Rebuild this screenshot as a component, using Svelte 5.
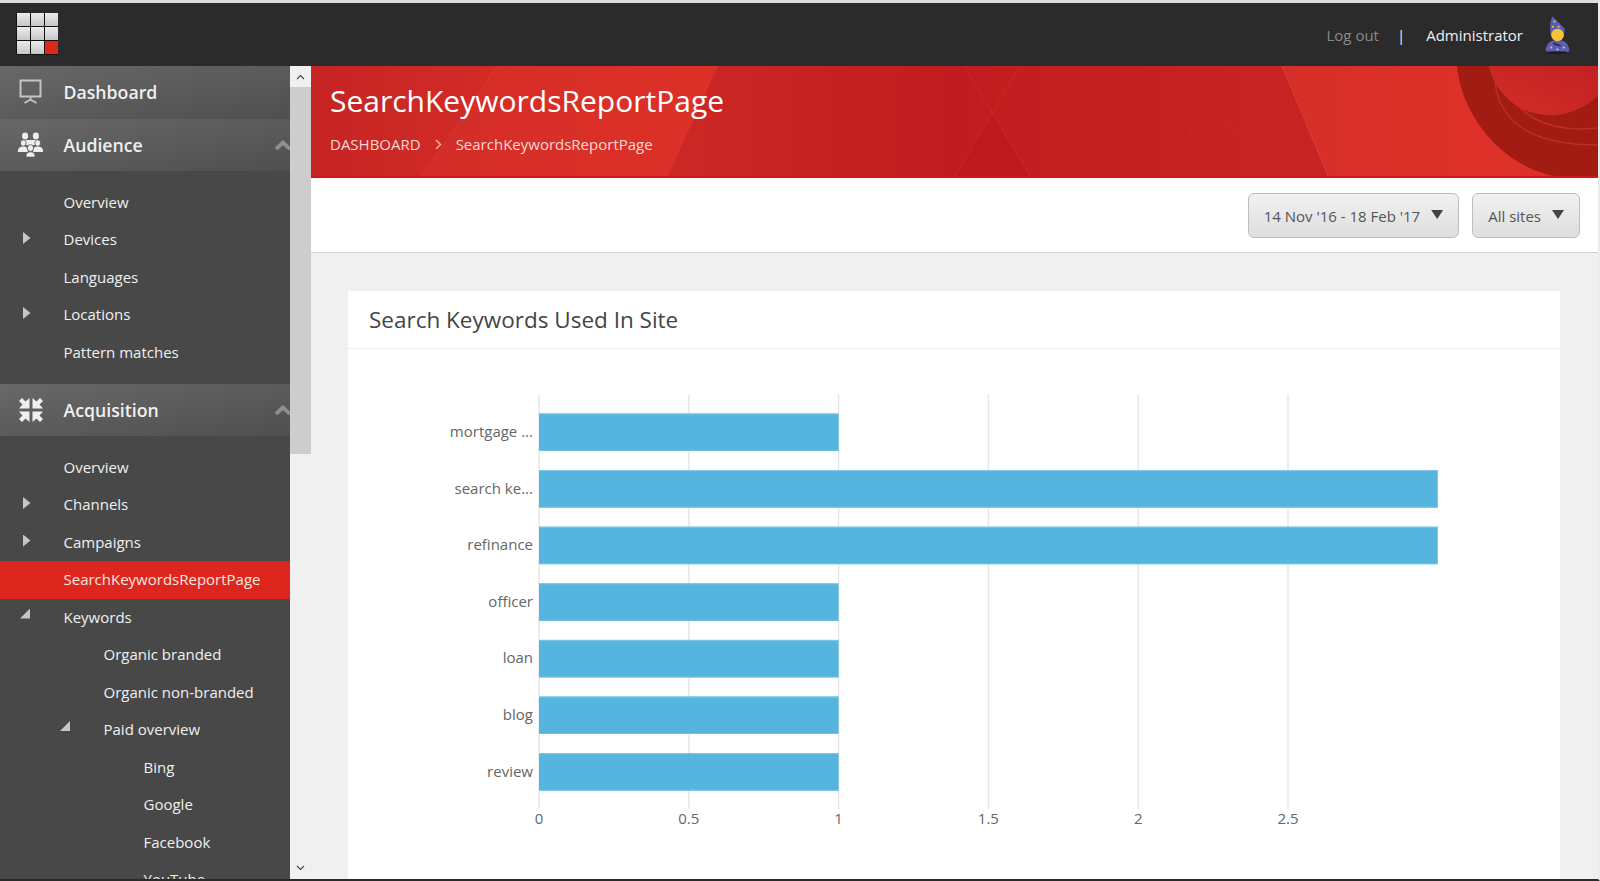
<script>
  const audience = [
    { label: "Overview" },
    { label: "Devices", arrow: "right" },
    { label: "Languages" },
    { label: "Locations", arrow: "right" },
    { label: "Pattern matches" },
  ];
  const acquisition = [
    { label: "Overview" },
    { label: "Channels", arrow: "right" },
    { label: "Campaigns", arrow: "right" },
    { label: "SearchKeywordsReportPage", active: true },
    { label: "Keywords", arrow: "down" },
    { label: "Organic branded", depth: 1 },
    { label: "Organic non-branded", depth: 1 },
    { label: "Paid overview", depth: 1, arrow: "down" },
    { label: "Bing", depth: 2 },
    { label: "Google", depth: 2 },
    { label: "Facebook", depth: 2 },
    { label: "YouTube", depth: 2 },
  ];

  const keywords = [
    { name: "mortgage ...", value: 1 },
    { name: "search ke...", value: 3 },
    { name: "refinance", value: 3 },
    { name: "officer", value: 1 },
    { name: "loan", value: 1 },
    { name: "blog", value: 1 },
    { name: "review", value: 1 },
  ];
  const ticks = [0, 0.5, 1, 1.5, 2, 2.5];
  const x0 = 539;
  const unit = 299.6;
</script>

<div class="page">
  <div class="frame">
    <header class="topbar">
      <div class="logo">
        {#each Array(9) as _, i}
          <span class:red={i === 8}></span>
        {/each}
      </div>
      <nav class="user">
        <span class="logout">Log out</span>
        <span class="sep">|</span>
        <span class="admin">Administrator</span>
        <svg class="wizard" width="25" height="40" viewBox="0 0 24 38">
          <path d="M7 1 L19 13 L18 21 L6 21 C4 14 5 6 7 1Z" fill="#5a5db4" />
          <path d="M3 35 C0 35 0 32 2 29 C4 25 7 24 12 24 C17 24 20 25 22 29 C24 32 24 36 20 36 Z" fill="#5b5fb8" />
          <ellipse cx="12" cy="36" rx="10" ry="1.5" fill="#1c1c1c" />
          <ellipse cx="12" cy="19" rx="6" ry="6" fill="#f6c23a" />
          <path d="M8 26 L16 29 L14 30 L8 28Z" fill="#2e2e50" />
          <g fill="#e8d24a">
            <circle cx="9" cy="6" r="1" /><circle cx="13" cy="11" r="1" /><circle cx="7.5" cy="11" r="1" />
            <circle cx="6" cy="31" r="1" /><circle cx="18" cy="31" r="1" /><circle cx="12" cy="33" r="1" />
          </g>
        </svg>
      </nav>
    </header>

    <div class="main">
      <aside class="sidebar">
        <div class="section">
          <svg class="sec-icon" width="26" height="26" viewBox="0 0 26 26" fill="none" stroke="#c4c4c4">
            <rect x="2.5" y="1.5" width="20" height="16" stroke-width="2" />
            <path d="M12.5 18 V20.5 M12.5 20.5 L6.5 24 M12.5 20.5 L18.5 24" stroke-width="1.8" />
          </svg>
          <span>Dashboard</span>
        </div>

        <div class="section">
          <svg class="sec-icon people" width="27" height="26" viewBox="0 0 30 26" preserveAspectRatio="none" fill="#eee">
            <circle cx="9" cy="4" r="3.4" /><circle cx="21" cy="4" r="3.4" />
            <path d="M5 13 C5 9 8 8 9 8 H21 C22 8 25 9 25 13 Z" />
            <circle cx="7" cy="11" r="3.2" stroke="#555" stroke-width=".8" /><circle cx="23" cy="11" r="3.2" stroke="#555" stroke-width=".8" />
            <path d="M1 20 C1 15 4 14.5 7 14.5 C10 14.5 12 15 12 20 Z" /><path d="M18 20 C18 15 20 14.5 23 14.5 C26 14.5 29 15 29 20 Z" />
            <circle cx="15" cy="16" r="3.4" stroke="#555" stroke-width=".8" />
            <path d="M10 25 C10 21 12 20 15 20 C18 20 20 21 20 25 Z" stroke="#555" stroke-width=".6" />
          </svg>
          <span>Audience</span>
          <svg class="chev" width="16" height="10" viewBox="0 0 16 10" fill="none" stroke="#8f8f8f" stroke-width="3.8"><path d="M1 9 L8 2.5 L15 9" /></svg>
        </div>
        <ul class="tree">
          {#each audience as item}
            <li class="d{item.depth ?? 0}" class:active={item.active}>
              {#if item.arrow}<i class="arrow {item.arrow}"></i>{/if}
              {item.label}
            </li>
          {/each}
        </ul>

        <div class="section">
          <svg class="sec-icon" width="26" height="26" viewBox="0 0 26 26" fill="#f0f0f0">
            <path d="M1 4 L4 1 L7.5 4.5 L11.5 1 V11.5 H1 L4.5 7.5 Z" />
            <path d="M25 4 L22 1 L18.5 4.5 L14.5 1 V11.5 H25 L21.5 7.5 Z" />
            <path d="M1 22 L4 25 L7.5 21.5 L11.5 25 V14.5 H1 L4.5 18.5 Z" />
            <path d="M25 22 L22 25 L18.5 21.5 L14.5 25 V14.5 H25 L21.5 18.5 Z" />
          </svg>
          <span>Acquisition</span>
          <svg class="chev" width="16" height="10" viewBox="0 0 16 10" fill="none" stroke="#8f8f8f" stroke-width="3.8"><path d="M1 9 L8 2.5 L15 9" /></svg>
        </div>
        <ul class="tree">
          {#each acquisition as item}
            <li class="d{item.depth ?? 0}" class:active={item.active}>
              {#if item.arrow}<i class="arrow {item.arrow}"></i>{/if}
              {item.label}
            </li>
          {/each}
        </ul>
      </aside>

      <div class="scroll">
        <button class="scroll-btn" aria-label="up">
          <svg width="9" height="6" viewBox="0 0 9 6" fill="none" stroke="#444" stroke-width="1.1"><path d="M1 5 L4.5 1.5 L8 5" /></svg>
        </button>
        <div class="thumb"></div>
        <button class="scroll-btn down" aria-label="down">
          <svg width="9" height="6" viewBox="0 0 9 6" fill="none" stroke="#444" stroke-width="1.1"><path d="M1 1 L4.5 4.5 L8 1" /></svg>
        </button>
      </div>

      <div class="content">
        <section class="banner">
          <svg class="banner-bg" viewBox="311 66 1287 112" preserveAspectRatio="none">
            <defs>
              <linearGradient id="g1" x1="0" x2="1" y1="0" y2="0">
                <stop offset="0" stop-color="#c52423" /><stop offset="1" stop-color="#d32c27" />
              </linearGradient>
              <linearGradient id="g2" x1="0" x2="1" y1="0" y2="0">
                <stop offset="0" stop-color="#d42d27" /><stop offset="1" stop-color="#dd3128" />
              </linearGradient>
              <linearGradient id="g3" x1="0" x2="1" y1="0" y2="0">
                <stop offset="0" stop-color="#cb2725" /><stop offset=".3" stop-color="#cb2725" /><stop offset=".5" stop-color="#c11c1f" /><stop offset=".72" stop-color="#c82323" /><stop offset="1" stop-color="#c92423" />
              </linearGradient>
              <linearGradient id="g4" x1="0" x2="1" y1="0" y2="0">
                <stop offset="0" stop-color="#d62f29" /><stop offset=".7" stop-color="#de3128" /><stop offset="1" stop-color="#d92e27" />
              </linearGradient>
              <linearGradient id="g5" x1="0" x2="1" y1="1" y2="0">
                <stop offset="0" stop-color="#d32d27" /><stop offset="1" stop-color="#c12222" />
              </linearGradient>
            </defs>
            <rect x="311" y="66" width="1287" height="112" fill="url(#g3)" />
            <polygon points="311,66 497,66 421,178 311,178" fill="url(#g1)" />
            <polygon points="497,66 718,66 667,178 421,178" fill="url(#g2)" />
            <polygon points="1282,66 1598,66 1598,178 1329,178" fill="url(#g4)" />
            <polygon points="992,113 954,178 1031,178" fill="#bd1a1d" />
            <path d="M964 66 L1031 178 M1020 66 L954 178" stroke="#d23a33" stroke-width="1" opacity=".45" fill="none" />
            <path d="M1182 66 L1197 178 M1215 118 L1300 178" stroke="#d23a33" stroke-width="1" opacity=".2" fill="none" />
            <path d="M1282 66 L1329 178" stroke="#e2463a" stroke-width="1" opacity=".7" fill="none" />
            <path d="M497 66 L421 178" stroke="#e0443a" stroke-width="1" opacity=".5" fill="none" />
            <path d="M1457 66 C1462 120 1510 178 1575 178 L1598 178 L1598 66 Z" fill="#a31c14" />
            <path d="M1489 66 C1490 72 1493 78 1495 83 C1502 94 1510 102 1520 108 C1530 113 1545 116 1557 115 C1572 113 1588 106 1598 95 L1598 66 Z" fill="url(#g5)" />
            <path d="M1495 83 C1500 118 1525 145 1598 145 M1520 108 C1535 122 1560 132 1598 128" fill="none" stroke="#bd2e25" stroke-width="1.5" />
          </svg>
          <h1>SearchKeywordsReportPage</h1>
          <div class="crumbs">
            <span>DASHBOARD</span>
            <svg width="7" height="11" viewBox="0 0 7 11" fill="none" stroke="#f0a9a0" stroke-width="1.6"><path d="M1 1 L5.5 5.5 L1 10" /></svg>
            <span>SearchKeywordsReportPage</span>
          </div>
        </section>

        <div class="toolbar">
          <button class="drop">14 Nov '16 - 18 Feb '17<i></i></button>
          <button class="drop">All sites<i></i></button>
        </div>

        <div class="body">
          <div class="card">
            <h2>Search Keywords Used In Site</h2>
            <svg class="chart" viewBox="348 349 1212 530" width="1212" height="530">
              {#each ticks as t}
                <line x1={x0 + t * unit} x2={x0 + t * unit} y1="394.5" y2="809" stroke="#e6e6e6" stroke-width="1.4" />
                <text x={x0 + t * unit} y="824" text-anchor="middle">{t}</text>
              {/each}
              {#each keywords as k, i}
                <rect x={x0} y={413.5 + i * 56.6} width={k.value * unit} height="37.5" fill="#55b5df" />
                <rect x={x0} y={413.5 + i * 56.6} width={k.value * unit} height="1" fill="#7fc8e8" />
                <rect x={x0} y={450 + i * 56.6} width={k.value * unit} height="1" fill="#6cc0e4" />
                <text x="533" y={437 + i * 56.6} text-anchor="end">{k.name}</text>
              {/each}
            </svg>
          </div>
        </div>
      </div>
    </div>
  </div>
</div>

<style>
  :global(body) {
    margin: 0;
    background: #fff;
  }

  .page {
    width: 1600px;
    height: 881px;
    overflow: hidden;
    font-family: "Open Sans", "Liberation Sans", sans-serif;
    box-sizing: border-box;
    border-top: 3px solid #dcdcdc;
    border-bottom: 2px solid #2a2a2a;
    border-right: 2px solid #ececec;
  }

  .frame {
    display: flex;
    flex-direction: column;
    height: 100%;
  }

  .topbar {
    flex: 0 0 63px;
    background: #2b2b2b;
    display: flex;
    align-items: center;
    justify-content: space-between;
    padding: 0 28px 0 16px;
  }

  .logo {
    display: grid;
    grid-template-columns: repeat(3, 13px);
    grid-auto-rows: 13px;
    gap: 1px;
    background: #111;
    padding: 0.5px;
    margin-top: -2px;
  }

  .logo span {
    background: linear-gradient(#ececec, #c6c6c6);
  }

  .logo span.red {
    background: #dd291c;
  }

  .user {
    display: flex;
    align-items: center;
    font-size: 15px;
  }

  .logout {
    color: #8a8a8a;
  }

  .sep {
    color: #eee;
    margin: 0 21px 0 18px;
  }

  .admin {
    color: #f0f0f0;
  }

  .wizard {
    margin-left: 22px;
  }

  .main {
    flex: 1;
    display: flex;
    min-height: 0;
  }

  .sidebar {
    flex: 0 0 290px;
    background: #484848;
    overflow: hidden;
    color: #f0f0f0;
  }

  .section {
    height: 52.5px;
    display: flex;
    align-items: center;
    background: linear-gradient(170deg, #686868, #4f4f4f);
    font-size: 17.7px;
    font-weight: 600;
    overflow: hidden;
    position: relative;
  }

  .section span {
    position: absolute;
    left: 63.5px;
  }

  .sec-icon {
    margin-left: 18px;
  }

  .sec-icon.people {
    margin-left: 17px;
  }

  .chev {
    position: absolute;
    right: -1px;
    top: 21px;
  }

  .tree {
    list-style: none;
    margin: 0;
    padding: 12.5px 0;
    font-size: 15px;
  }

  .tree li {
    height: 37.5px;
    line-height: 37.5px;
    padding-left: 63.5px;
    position: relative;
    white-space: nowrap;
  }

  .tree li.d1 {
    padding-left: 103.5px;
  }

  .tree li.d2 {
    padding-left: 143.5px;
  }

  .tree li.active {
    background: #dd261d;
    color: #f6e6e0;
  }

  .arrow {
    position: absolute;
    background: #c6c6c6;
  }

  .arrow.right {
    left: 23px;
    top: 11px;
    width: 7.5px;
    height: 12px;
    clip-path: polygon(0 0, 100% 50%, 0 100%);
  }

  .arrow.down {
    left: 20px;
    top: 10px;
    width: 10px;
    height: 10px;
    clip-path: polygon(100% 0, 100% 100%, 0 100%);
  }

  .d1 .arrow.down {
    left: 60px;
  }

  .scroll {
    flex: 0 0 21px;
    background: #f0f0f0;
    display: flex;
    flex-direction: column;
    position: relative;
  }

  .scroll-btn {
    height: 21px;
    border: 0;
    padding: 0;
    background: #f0f0f0;
    display: flex;
    align-items: center;
    justify-content: center;
  }

  .scroll-btn.down {
    margin-top: auto;
    margin-bottom: 1px;
  }

  .thumb {
    height: 367px;
    background: #cdcdcd;
  }

  .content {
    flex: 1;
    min-width: 0;
    display: flex;
    flex-direction: column;
    background: #f0f0f0;
    overflow: hidden;
  }

  .banner {
    flex: 0 0 112px;
    box-sizing: border-box;
    position: relative;
    padding: 13px 19px 0;
    border-bottom: 2px solid #cf1719;
    overflow: hidden;
    color: #fff;
  }

  .banner-bg {
    position: absolute;
    inset: 0;
    width: 100%;
    height: 112px;
  }

  .banner h1 {
    position: relative;
    margin: 0;
    font-size: 30px;
    font-weight: 400;
    line-height: 44px;
  }

  .crumbs {
    position: relative;
    display: flex;
    align-items: center;
    gap: 14px;
    font-size: 15px;
    line-height: 22px;
    margin-top: 10px;
    color: #f6d8d3;
  }

  .toolbar {
    flex: 0 0 75px;
    box-sizing: border-box;
    background: #fff;
    border-bottom: 1px solid #cfcfcf;
    display: flex;
    justify-content: flex-end;
    align-items: flex-start;
    gap: 13px;
    padding: 15px 18px 0 0;
  }

  .drop {
    height: 45px;
    box-sizing: border-box;
    padding: 0 15px;
    display: flex;
    align-items: center;
    gap: 11px;
    font: 15px "Open Sans", "Liberation Sans", sans-serif;
    color: #555;
    background: linear-gradient(#f1f1f1, #dedede);
    border: 1px solid #bdbdbd;
    border-radius: 6px;
  }

  .drop i {
    width: 12px;
    height: 9px;
    margin-top: -2px;
    background: #444;
    clip-path: polygon(0 0, 100% 0, 50% 100%);
  }

  .body {
    flex: 1;
    min-height: 0;
    padding: 38px 38px 0 37px;
  }

  .card {
    background: #fff;
    height: 100%;
  }

  .card h2 {
    margin: 0;
    height: 58px;
    box-sizing: border-box;
    padding-left: 21px;
    border-bottom: 1px solid #eeeeee;
    font-size: 22.5px;
    font-weight: 400;
    line-height: 58px;
    color: #444;
  }

  .chart {
    display: block;
  }

  .chart text {
    font-size: 15px;
    fill: #666;
    font-family: "Open Sans", "Liberation Sans", sans-serif;
  }
</style>
